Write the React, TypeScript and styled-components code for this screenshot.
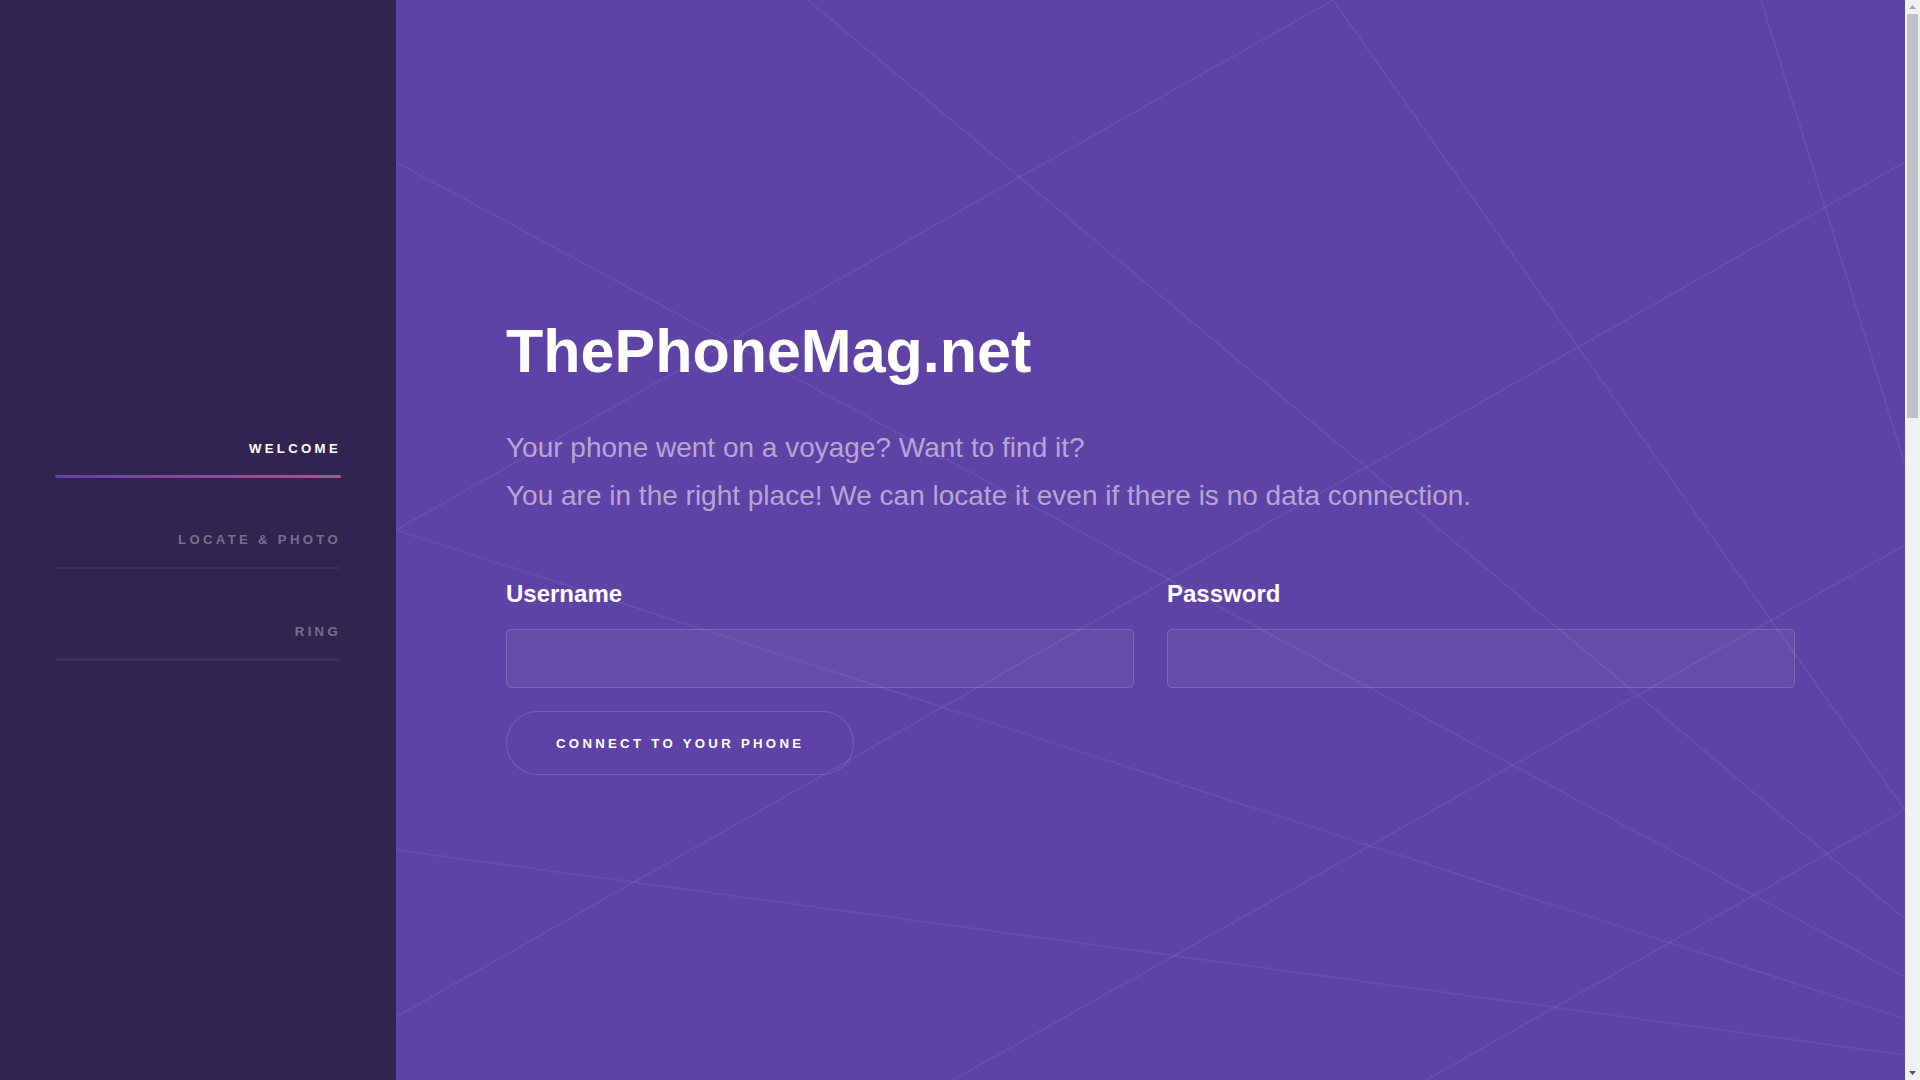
import React from "react";
import styled, { createGlobalStyle, css } from "styled-components";

const GlobalStyle = createGlobalStyle`
    html, body {
        margin: 0;
        padding: 0;
    }

    body {
        background: #312450;
        font-family: "Liberation Sans", Arial, Helvetica, sans-serif;
        color: rgba(255, 255, 255, 0.55);
    }

    * {
        box-sizing: border-box;
    }
`;

const navItems = [
    { id: "intro", label: "Welcome", active: true },
    { id: "one", label: "Locate & Photo", active: false },
    { id: "two", label: "Ring", active: false },
];

// background lines of the intro, in section coordinates (1509 x 1080)
const lines = [
    [412, 0, 1509, 919],
    [0, 162, 1509, 977],
    [0, 530, 937, 0],
    [0, 1017, 1509, 162],
    [937, 0, 1509, 810],
    [1365, 0, 1509, 465],
    [0, 530, 1509, 1019],
    [0, 850, 1509, 1055],
    [557, 1080, 1509, 545],
    [1030, 1080, 1509, 810],
];

const App = () => {
    return (
        <>
            <GlobalStyle />
            <Sidebar.Container>
                <Sidebar.Nav>
                    <Sidebar.List>
                        {navItems.map((item) => (
                            <Sidebar.Item key={item.id}>
                                <Sidebar.Link href={`#${item.id}`} $active={item.active}>
                                    {item.label}
                                </Sidebar.Link>
                            </Sidebar.Item>
                        ))}
                    </Sidebar.List>
                </Sidebar.Nav>
            </Sidebar.Container>

            <Wrapper>
                <Intro.Section id="intro">
                    <Intro.Lines viewBox="0 0 1509 1080" preserveAspectRatio="none">
                        {lines.map(([x1, y1, x2, y2], i) => (
                            <line key={i} x1={x1} y1={y1} x2={x2} y2={y2} />
                        ))}
                    </Intro.Lines>

                    <Intro.Inner>
                        <Intro.Title>ThePhoneMag.net</Intro.Title>
                        <Intro.Text>
                            Your phone went on a voyage? Want to find it?
                            <br />
                            You are in the right place! We can locate it even if there is no data connection.
                        </Intro.Text>

                        <Form.Container onSubmit={(e) => e.preventDefault()}>
                            <Form.Fields>
                                <Form.Field>
                                    <Form.Label htmlFor="username">Username</Form.Label>
                                    <Form.Input id="username" type="text" />
                                </Form.Field>
                                <Form.Field>
                                    <Form.Label htmlFor="password">Password</Form.Label>
                                    <Form.Input id="password" type="password" />
                                </Form.Field>
                            </Form.Fields>
                            <Form.Button type="submit">Connect to your phone</Form.Button>
                        </Form.Container>
                    </Intro.Inner>
                </Intro.Section>

                <Spacer id="one" $bg="#5052b5" />
                <Spacer id="two" $bg="#4c5c96" />
            </Wrapper>

            <Scroll.Track aria-hidden>
                <Scroll.Arrow>
                    <svg width="7" height="4" viewBox="0 0 7 4">
                        <polygon points="0,4 3.5,0 7,4" fill="#a3a3a3" />
                    </svg>
                </Scroll.Arrow>
                <Scroll.Thumb />
                <Scroll.Rest />
                <Scroll.Arrow>
                    <svg width="7" height="4" viewBox="0 0 7 4">
                        <polygon points="0,0 7,0 3.5,4" fill="#505050" />
                    </svg>
                </Scroll.Arrow>
            </Scroll.Track>
        </>
    );
};

export default App;


const Sidebar = {
    Container: styled.aside`
        position: fixed;
        top: 0;
        left: 0;
        z-index: 10;

        width: 396px;
        height: 100vh;

        background: #312450;

        display: flex;
        flex-direction: column;
        justify-content: center;

        padding: 0 55px;
    `,

    Nav: styled.nav`
        width: 100%;
    `,

    List: styled.ul`
        list-style: none;
        margin: 0;
        padding: 0;
    `,

    Item: styled.li`
        margin: 33px 0 0 0;

        &:first-child {
            margin-top: 0;
        }
    `,

    Link: styled.a<{ $active: boolean }>`
        position: relative;
        display: block;

        padding: 17.8px 0;

        font-size: 13.2px;
        font-weight: 700;
        line-height: 1.75;
        letter-spacing: 3.3px;
        text-transform: uppercase;
        text-align: right;
        text-decoration: none;

        color: ${(p) => (p.$active ? "#ffffff" : "rgba(255, 255, 255, 0.35)")};

        &::before,
        &::after {
            content: "";
            position: absolute;
            right: 0;
            bottom: 0;

            width: 100%;
            height: 2.64px;

            border-radius: 2.64px;
        }

        &::before {
            background: #3c2c62;
        }

        &::after {
            background-image: linear-gradient(to right, #5e42a6, #b74e91);
            max-width: 0;
        }

        ${(p) =>
            p.$active &&
            css`
                &::after {
                    max-width: 100%;
                }
            `}
    `,
};

const Wrapper = styled.main`
    margin-left: 396px;
    margin-right: 15px;
`;

const Intro = {
    Section: styled.section`
        position: relative;

        min-height: 100vh;

        background: #5e42a6;

        padding: 311px 110px 80px 110px;

        overflow: hidden;
    `,

    Lines: styled.svg`
        position: absolute;
        top: 0;
        left: 0;

        width: 100%;
        height: 1080px;

        stroke: rgba(255, 255, 255, 0.065);
        stroke-width: 1.8;
        fill: none;

        pointer-events: none;
    `,

    Inner: styled.div`
        position: relative;
        z-index: 1;
    `,

    Title: styled.h1`
        margin: 0;

        font-size: 61px;
        font-weight: 700;
        line-height: 80px;

        color: #ffffff;
    `,

    Text: styled.p`
        margin: 32.5px 0 0 0;

        font-size: 28px;
        line-height: 48.5px;

        color: rgba(255, 255, 255, 0.55);
    `,
};

const Form = {
    Container: styled.form`
        margin-top: 55px;
    `,

    Fields: styled.div`
        display: grid;
        grid-template-columns: 1fr 1fr;
        column-gap: 33px;
    `,

    Field: styled.div`
        display: flex;
        flex-direction: column;
    `,

    Label: styled.label`
        margin-bottom: 17.6px;

        font-size: 24px;
        font-weight: 700;
        line-height: 36px;

        color: #ffffff;
    `,

    Input: styled.input`
        height: 59.4px;

        background: rgba(255, 255, 255, 0.05);
        border: 1px solid rgba(255, 255, 255, 0.15);
        border-radius: 5px;

        padding: 0 16px;

        font-family: inherit;
        font-size: 22px;
        color: #ffffff;

        outline: none;
    `,

    Button: styled.button`
        display: block;

        margin-top: 22.3px;

        height: 64.5px;
        padding: 0 50px;

        background: transparent;
        border: 0;
        border-radius: 32px;
        box-shadow: inset 0 0 0 1px rgba(255, 255, 255, 0.15);

        font-family: inherit;
        font-size: 13.2px;
        font-weight: 700;
        letter-spacing: 3.3px;
        text-transform: uppercase;

        color: #ffffff;

        cursor: pointer;
    `,
};

const Spacer = styled.section<{ $bg: string }>`
    height: 860px;

    background: ${(p) => p.$bg};
`;

// the browser's classic scrollbar, as seen in the reference
const Scroll = {
    Track: styled.div`
        position: fixed;
        top: 0;
        right: 0;
        z-index: 20;

        width: 15px;
        height: 100vh;

        background: #f1f1f1;

        display: flex;
        flex-direction: column;
    `,

    Arrow: styled.div`
        height: 14px;
        flex: none;

        display: flex;
        align-items: center;
        justify-content: center;
    `,

    Thumb: styled.div`
        height: 404px;
        flex: none;

        margin: 0 2px;

        background: #c1c1c1;
    `,

    Rest: styled.div`
        flex: 1;
    `,
};
